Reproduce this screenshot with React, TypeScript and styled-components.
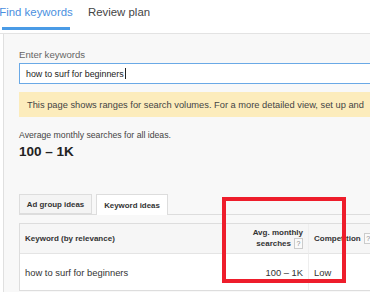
import React from "react";
import styled, { createGlobalStyle } from "styled-components";

const Global = createGlobalStyle`
  html, body { margin: 0; padding: 0; background: #fff; }
  body { font-family: "Liberation Sans", Arial, sans-serif; width: 370px; height: 292px; overflow: hidden; }
`;

const Page = styled.div`
  position: relative;
  width: 370px;
  height: 292px;
  overflow: hidden;
`;

const TopTabs = styled.div`
  display: flex;
  border-bottom: 1px solid #e3e3e3;
  padding-left: 2px;
  box-sizing: border-box;
  height: 34px;
`;

const TopTab = styled.div<{ $active?: boolean }>`
  display: flex;
  align-items: center;
  justify-content: center;
  white-space: nowrap;
  padding: 0 0 3px 0;
  margin-right: ${(p) => (p.$active ? "18px" : "0")};
  width: ${(p) => (p.$active ? "68px" : "auto")};
  font-size: 11.4px;
  color: ${(p) => (p.$active ? "#4a8fe0" : "#444")};
  border-bottom: 3px solid ${(p) => (p.$active ? "#4a9be6" : "transparent")};
  height: 30px;
  box-sizing: border-box;
`;

const Panel = styled.div`
  margin-left: 3px;
  border-left: 1px solid #e0e0e0;
  background: #f8f8f8;
  padding: 14px 0 0 15px;
  height: 258px;
  box-sizing: border-box;
  width: 500px;
`;

const Label = styled.div`
  font-size: 9.6px;
  color: #666;
  line-height: 13px;
  margin-bottom: 2px;
`;

const Input = styled.div`
  height: 21px;
  box-sizing: border-box;
  border: 1px solid #6aa9e6;
  background: #fff;
  font-size: 8.9px;
  color: #222;
  display: flex;
  align-items: center;
  padding-left: 6px;
`;

const Caret = styled.span`
  display: inline-block;
  width: 1px;
  height: 11px;
  background: #222;
  margin-left: 1px;
`;

const Notice = styled.div`
  margin-top: 8px;
  height: 25px;
  background: #fcecbc;
  font-size: 9.3px;
  color: #444;
  display: flex;
  align-items: center;
  padding-left: 8px;
  white-space: nowrap;
`;

const Summary = styled.div`
  margin-top: 12px;
  font-size: 8.7px;
  color: #444;
  line-height: 12px;
`;

const Big = styled.div`
  font-size: 13.5px;
  font-weight: bold;
  color: #222;
  line-height: 18px;
  margin-top: 2px;
`;

const IdeaTabs = styled.div`
  margin-top: 33px;
  display: flex;
  gap: 4px;
  border-bottom: 1px solid #ddd;
  height: 20px;
`;

const IdeaTab = styled.div<{ $active?: boolean }>`
  width: ${(p) => (p.$active ? "72px" : "73px")};
  box-sizing: border-box;
  height: ${(p) => (p.$active ? "21px" : "20px")};
  border: 1px solid #ddd;
  border-bottom: ${(p) => (p.$active ? "none" : "1px solid #ddd")};
  background: ${(p) => (p.$active ? "#fff" : "#f4f4f4")};
  font-size: 7.9px;
  font-weight: bold;
  color: #333;
  display: flex;
  align-items: center;
  justify-content: center;
`;

const Table = styled.div`
  margin-top: 8px;
  border: 1px solid #ddd;
  background: #fff;
  display: grid;
  grid-template-columns: 209px 80px 120px;
`;

const HeadCell = styled.div<{ $right?: boolean; $divider?: boolean }>`
  height: 30px;
  box-sizing: border-box;
  background: #f6f6f6;
  border-bottom: 1px solid #e4e4e4;
  border-right: ${(p) => (p.$divider ? "1px solid #eee" : "none")};
  font-size: 8px;
  font-weight: bold;
  color: #333;
  display: flex;
  align-items: center;
  justify-content: ${(p) => (p.$right ? "flex-end" : "flex-start")};
  text-align: ${(p) => (p.$right ? "right" : "left")};
  padding: 0 5px;
  line-height: 10px;
`;

const Cell = styled.div<{ $right?: boolean; $divider?: boolean }>`
  height: 36px;
  box-sizing: border-box;
  border-right: ${(p) => (p.$divider ? "1px solid #eee" : "none")};
  font-size: 9.4px;
  color: #333;
  display: flex;
  align-items: center;
  justify-content: ${(p) => (p.$right ? "flex-end" : "flex-start")};
  padding: 0 5px;
`;

const Help = styled.span`
  display: inline-flex;
  align-items: center;
  justify-content: center;
  width: 7px;
  height: 9px;
  border: 1px solid #ccc;
  background: #fafafa;
  font-size: 7px;
  font-weight: normal;
  color: #888;
  margin-left: 3px;
  vertical-align: middle;
  box-sizing: content-box;
`;

const Highlight = styled.div`
  position: absolute;
  left: 222px;
  top: 197px;
  width: 124px;
  height: 86px;
  box-sizing: border-box;
  border: 4px solid #ee1d2b;
  pointer-events: none;
`;

export default function App() {
  return (
    <Page>
      <Global />
      <TopTabs>
        <TopTab $active>Find keywords</TopTab>
        <TopTab>Review plan</TopTab>
      </TopTabs>
      <Panel>
        <Label>Enter keywords</Label>
        <Input>
          how to surf for beginners
          <Caret />
        </Input>
        <Notice>
          This page shows ranges for search volumes. For a more detailed view, set up and
        </Notice>
        <Summary>Average monthly searches for all ideas.</Summary>
        <Big>100 – 1K</Big>
        <IdeaTabs>
          <IdeaTab>Ad group ideas</IdeaTab>
          <IdeaTab $active>Keyword ideas</IdeaTab>
        </IdeaTabs>
        <Table>
          <HeadCell>Keyword (by relevance)</HeadCell>
          <HeadCell $right $divider>
            <span>
              Avg. monthly
              <br />
              searches<Help>?</Help>
            </span>
          </HeadCell>
          <HeadCell>
            Competition<Help>?</Help>
          </HeadCell>
          <Cell>how to surf for beginners</Cell>
          <Cell $right $divider>100 – 1K</Cell>
          <Cell>Low</Cell>
        </Table>
      </Panel>
      <Highlight />
    </Page>
  );
}
